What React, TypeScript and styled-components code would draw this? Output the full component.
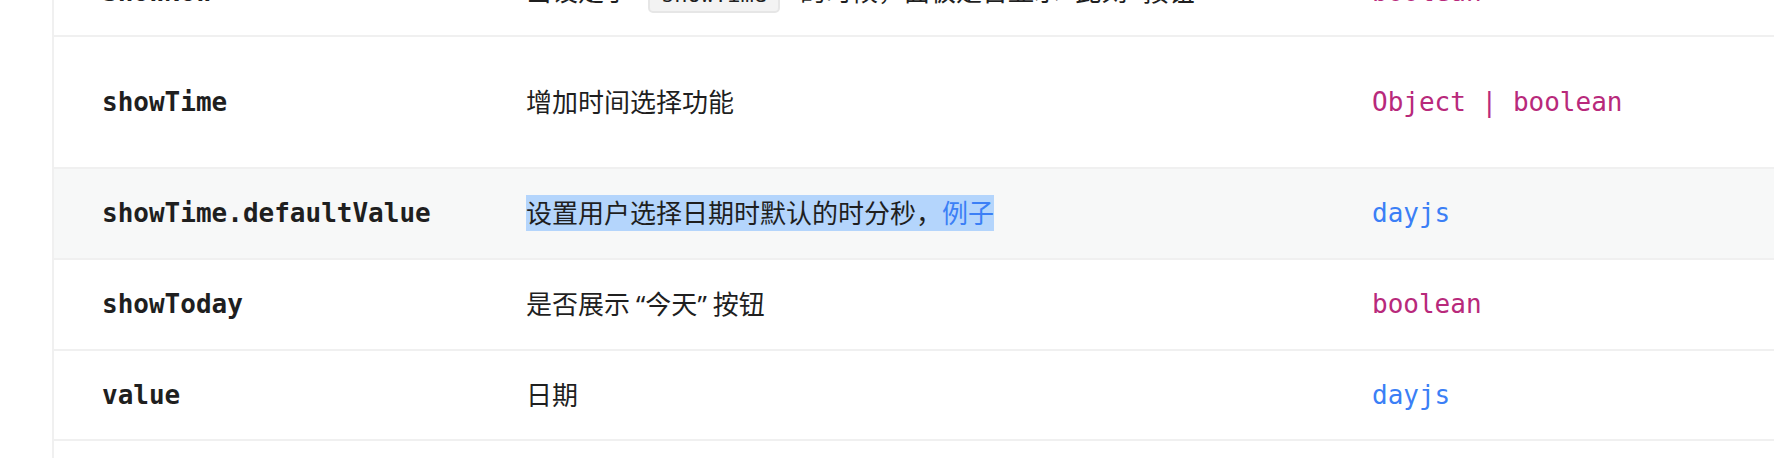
import React from "react";
import styled, { createGlobalStyle } from "styled-components";

const Global = createGlobalStyle`
  html, body { margin: 0; padding: 0; background: #ffffff; overflow: hidden; }
  body { font-family: "Noto Sans", "Noto Sans CJK SC", sans-serif; }
`;

const Page = styled.div`
  width: 1774px;
  height: 458px;
  overflow: hidden;
  background: #ffffff;
`;

const Table = styled.div`
  margin-left: 52px;
  margin-top: -54px;
  border-left: 2px solid #f0f0f0;
`;

const Row = styled.div<{ $h: number; $hover?: boolean; $tail?: boolean }>`
  display: grid;
  grid-template-columns: 424px 846px 1fr;
  align-items: ${(p) => (p.$tail ? "end" : "center")};
  height: ${(p) => p.$h}px;
  padding-bottom: ${(p) => (p.$tail ? 22 : 0)}px;
  box-sizing: content-box;
  border-bottom: 2px solid #f0f0f0;
  background: ${(p) => (p.$hover ? "#f7f8f8" : "transparent")};
`;

const Cell = styled.div`
  padding: 0 48px;
  min-width: 0;
  white-space: nowrap;
`;

const Name = styled(Cell)`
  font-family: "DejaVu Sans Mono", "Liberation Mono", monospace;
  font-weight: 700;
  font-size: 26px;
  line-height: 41px;
  color: #1f1f1f;
`;

const Desc = styled(Cell)`
  font-family: "Noto Sans", "Noto Sans CJK SC", sans-serif;
  font-size: 26px;
  line-height: 41px;
  color: #1f1f1f;
`;

const Type = styled(Cell)<{ $link?: boolean }>`
  font-family: "DejaVu Sans Mono", "Liberation Mono", monospace;
  font-size: 26px;
  line-height: 41px;
  color: ${(p) => (p.$link ? "#3b7ff6" : "#b8297b")};
`;

const Code = styled.code`
  display: inline-block;
  margin: 0 20px 0 18px;
  padding: 0 11px;
  font-family: "DejaVu Sans Mono", "Liberation Mono", monospace;
  font-size: 22px;
  line-height: 33px;
  background: #f3f3f3;
  border: 2px solid #e6e6e6;
  border-radius: 5px;
  color: #1f1f1f;
  vertical-align: middle;
`;

const Q = styled.span<{ $open?: boolean }>`
  padding: ${(p) => (p.$open ? "0 0 0 6px" : "0 6px 0 0")};
`;

const Selected = styled.span`
  background: #b4d5fc;
`;

const Link = styled.a`
  color: #3b7ff6;
  text-decoration: none;
`;

export default function App() {
  return (
    <Page>
      <Global />
      <Table>
        <Row $h={67} $tail>
          <Name>showNow</Name>
          <Desc>
            当设定了<Code>showTime</Code>的时候，面板是否显示<Q $open>“</Q>此刻<Q>”</Q>按钮
          </Desc>
          <Type>boolean</Type>
        </Row>
        <Row $h={130}>
          <Name>showTime</Name>
          <Desc>增加时间选择功能</Desc>
          <Type>Object | boolean</Type>
        </Row>
        <Row $h={89} $hover>
          <Name>showTime.defaultValue</Name>
          <Desc>
            <Selected>
              设置用户选择日期时默认的时分秒，<Link href="#">例子</Link>
            </Selected>
          </Desc>
          <Type $link>dayjs</Type>
        </Row>
        <Row $h={89}>
          <Name>showToday</Name>
          <Desc>
            是否展示<Q $open>“</Q>今天<Q>”</Q>按钮
          </Desc>
          <Type>boolean</Type>
        </Row>
        <Row $h={88}>
          <Name>value</Name>
          <Desc>日期</Desc>
          <Type $link>dayjs</Type>
        </Row>
        <Row $h={89}>
          <Name>onChange</Name>
          <Desc>时间发生变化的回调</Desc>
          <Type>function(date, dateString)</Type>
        </Row>
      </Table>
    </Page>
  );
}
